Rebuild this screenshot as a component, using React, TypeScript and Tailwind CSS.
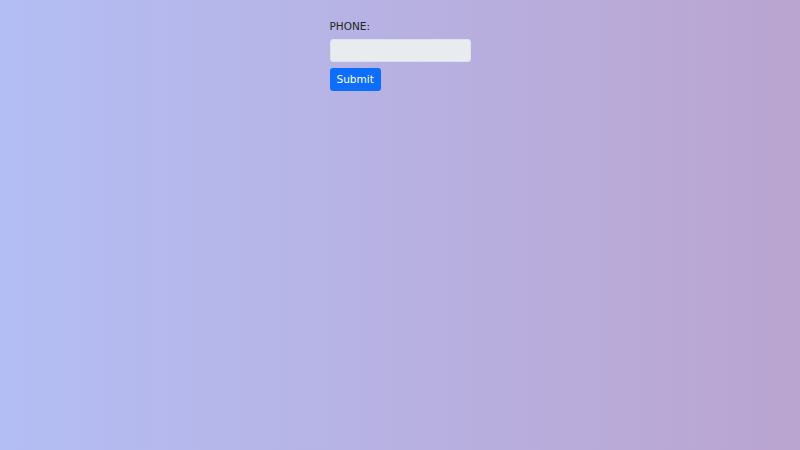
export default function App() {
  return (
    <div className="flex min-h-[450px] w-full justify-center bg-gradient-to-r from-[#b3bef4] to-[#baa4d0] font-['DejaVu_Sans',sans-serif]">
      <form className="mt-[19px] flex w-[141px] flex-col items-start" onSubmit={(e) => e.preventDefault()}>
        <label className="text-[10.5px] leading-[15px] text-[#212529]">PHONE:</label>
        <input
          type="text"
          className="mt-[5px] h-[23px] w-[141px] rounded-[3px] border border-[#dee2e6] bg-[#e9ecef] px-2 text-[10.5px] outline-none"
        />
        <button
          type="submit"
          className="mt-[6px] h-[23px] rounded-[3px] bg-[#0d6efd] px-[7px] text-[10.5px] leading-[23px] text-white"
        >
          Submit
        </button>
      </form>
    </div>
  );
}
